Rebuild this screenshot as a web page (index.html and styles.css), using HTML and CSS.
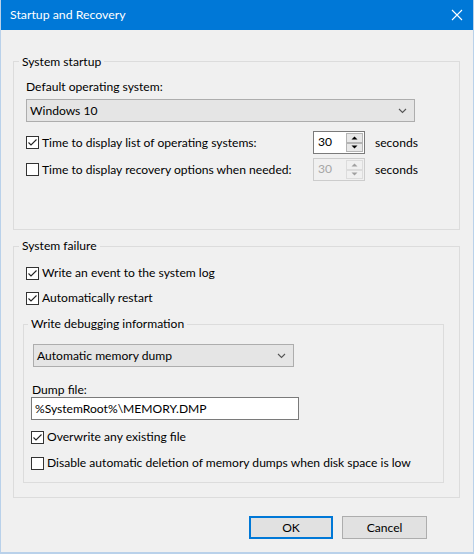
FILE: index.html
```html
<!DOCTYPE html>
<html>
<head>
<meta charset="utf-8">
<link rel="stylesheet" href="styles.css">
</head>
<body>
<div class="window">
  <div class="titlebar">
    <span class="title">Startup and Recovery</span>
    <svg class="close" width="12" height="12" viewBox="0 0 12 12"><path d="M1 1L11 11M11 1L1 11" stroke="#fff" stroke-width="1.1" fill="none"/></svg>
  </div>
  <div class="content">
    <div class="group g1">
      <div class="legend">System startup</div>
      <div class="label l1">Default operating system:</div>
      <div class="select s1"><span>Windows 10</span><svg width="9" height="6" viewBox="0 0 9 6"><path d="M1 1L4.5 4.5L8 1" stroke="#555" stroke-width="1.1" fill="none"/></svg></div>
      <div class="spinrow r1">
        <label class="cb"><svg class="box" width="13" height="13" viewBox="0 0 13 13"><rect x="0.5" y="0.5" width="12" height="12" fill="#fff" stroke="#333"/><path d="M2.5 6.5L5 9L10.5 3.5" stroke="#222" stroke-width="1.1" fill="none"/></svg><span>Time to display list of operating systems:</span></label>
        <div class="spin"><span class="val">30</span><div class="btns"><div class="sb"><svg width="7" height="4" viewBox="0 0 7 4"><path d="M0.5 3.5L3.5 0.5L6.5 3.5Z" fill="#000"/></svg></div><div class="sb"><svg width="7" height="4" viewBox="0 0 7 4"><path d="M0.5 0.5L3.5 3.5L6.5 0.5Z" fill="#000"/></svg></div></div></div>
        <span class="sec">seconds</span>
      </div>
      <div class="spinrow r2">
        <label class="cb"><svg class="box" width="13" height="13" viewBox="0 0 13 13"><rect x="0.5" y="0.5" width="12" height="12" fill="#fff" stroke="#333"/></svg><span>Time to display recovery options when needed:</span></label>
        <div class="spin disabled"><span class="val">30</span><div class="btns"><div class="sb"><svg width="7" height="4" viewBox="0 0 7 4"><path d="M0.5 3.5L3.5 0.5L6.5 3.5Z" fill="#a0a0a0"/></svg></div><div class="sb"><svg width="7" height="4" viewBox="0 0 7 4"><path d="M0.5 0.5L3.5 3.5L6.5 0.5Z" fill="#a0a0a0"/></svg></div></div></div>
        <span class="sec">seconds</span>
      </div>
    </div>

    <div class="group g2">
      <div class="legend">System failure</div>
      <label class="cb c1"><svg class="box" width="13" height="13" viewBox="0 0 13 13"><rect x="0.5" y="0.5" width="12" height="12" fill="#fff" stroke="#333"/><path d="M2.5 6.5L5 9L10.5 3.5" stroke="#222" stroke-width="1.1" fill="none"/></svg><span>Write an event to the system log</span></label>
      <label class="cb c2"><svg class="box" width="13" height="13" viewBox="0 0 13 13"><rect x="0.5" y="0.5" width="12" height="12" fill="#fff" stroke="#333"/><path d="M2.5 6.5L5 9L10.5 3.5" stroke="#222" stroke-width="1.1" fill="none"/></svg><span>Automatically restart</span></label>
      <div class="group g3">
        <div class="legend">Write debugging information</div>
        <div class="select s2"><span>Automatic memory dump</span><svg width="9" height="6" viewBox="0 0 9 6"><path d="M1 1L4.5 4.5L8 1" stroke="#555" stroke-width="1.1" fill="none"/></svg></div>
        <div class="label l2">Dump file:</div>
        <div class="input">%SystemRoot%\MEMORY.DMP</div>
        <label class="cb c3"><svg class="box" width="13" height="13" viewBox="0 0 13 13"><rect x="0.5" y="0.5" width="12" height="12" fill="#fff" stroke="#333"/><path d="M2.5 6.5L5 9L10.5 3.5" stroke="#222" stroke-width="1.1" fill="none"/></svg><span>Overwrite any existing file</span></label>
        <label class="cb c4"><svg class="box" width="13" height="13" viewBox="0 0 13 13"><rect x="0.5" y="0.5" width="12" height="12" fill="#fff" stroke="#333"/></svg><span>Disable automatic deletion of memory dumps when disk space is low</span></label>
      </div>
    </div>

    <div class="buttons">
      <div class="btn ok">OK</div>
      <div class="btn">Cancel</div>
    </div>
  </div>
</div>
</body>
</html>
```

FILE: styles.css
```css
html, body {
  margin: 0;
  padding: 0;
  background: #ffffff;
}
.window {
  width: 474px;
  height: 554px;
  box-sizing: border-box;
  background: #f0f0f0;
  border-left: 1px solid #b9d1ea;
  border-right: 1px solid #b9d1ea;
  border-bottom: 2px solid #b9d1ea;
  font-family: "Lato", "Liberation Sans", sans-serif;
  font-size: 12.1px;
  color: #000;
  overflow: hidden;
}
.titlebar {
  height: 30px;
  background: #0078d7;
  margin: 0 -1px;
  display: flex;
  align-items: center;
  justify-content: space-between;
  padding: 0 11px 0 10px;
  color: #fff;
}
.title {
  font-size: 12.3px;
  line-height: 16px;
}
.close {
  display: block;
}
.content {
  padding: 31px 13px 0 12px;
}
.group {
  border: 1px solid #dcdcdc;
  box-sizing: border-box;
}
.legend {
  width: fit-content;
  line-height: 16px;
  background: #f0f0f0;
  padding: 0 3px;
}
.g1 {
  padding: 0 44px 48px 12px;
}
.g1 > .legend {
  margin: -8px 0 0 -7px;
}
.label {
  line-height: 16px;
}
.l1 {
  margin-top: 9px;
}
.select {
  height: 23px;
  box-sizing: border-box;
  background: #e5e5e5;
  border: 1px solid #adadad;
  display: flex;
  align-items: center;
  justify-content: space-between;
  padding: 0 7px 0 3px;
}
.select svg {
  display: block;
}
.s1 {
  margin-top: 4px;
}
.spinrow {
  display: flex;
  align-items: center;
  height: 23px;
  margin-right: -4px;
}
.r1 {
  margin-top: 9px;
}
.r2 {
  margin-top: 4px;
}
.spinrow .cb {
  flex: 1;
}
.cb {
  display: flex;
  align-items: center;
  line-height: 16px;
  white-space: nowrap;
}
.cb .box {
  display: block;
  flex: none;
  margin-right: 3px;
}
.spin {
  width: 52px;
  height: 23px;
  box-sizing: border-box;
  border: 1px solid #7a7a7a;
  background: #fff;
  display: flex;
}
.spin .val {
  flex: 1;
  padding-left: 4px;
  line-height: 19px;
}
.spin .btns {
  width: 17px;
  display: flex;
  flex-direction: column;
  padding: 1px 1px 1px 0;
  gap: 0;
}
.sb {
  flex: 1;
  border: 1px solid #b5b5b5;
  background: #e8e8e8;
  display: flex;
  align-items: center;
  justify-content: center;
}
.sb svg {
  display: block;
}
.spin.disabled {
  border-color: #cccccc;
  background: #f0f0f0;
  color: #a6a6a6;
}
.spin.disabled .sb {
  border-color: #dcdcdc;
  background: #f0f0f0;
}
.sec {
  width: 44px;
  margin-left: 10px;
}
.g2 {
  margin-top: 16px;
  padding: 0 15px 14px 9px;
}
.g2 > .legend {
  margin: -9px 0 0 -4px;
}
.g2 > .cb {
  margin-left: 3px;
}
.c1 {
  margin-top: 11px;
}
.c2 {
  margin-top: 9px;
}
.g3 {
  margin-top: 18px;
  padding: 0 8px 11px 8px;
}
.g3 > .legend {
  margin: -9px 0 0 -4px;
}
.s2 {
  margin-top: 12px;
  width: 261px;
  margin-left: 1px;
}
.l2 {
  margin-top: 15px;
  line-height: 15px;
}
.input {
  width: 268px;
  height: 23px;
  box-sizing: border-box;
  border: 1px solid #7a7a7a;
  background: #fff;
  margin-left: -1px;
  padding-left: 3px;
  line-height: 21px;
}
.g3 > .cb {
  margin-left: -1px;
}
.c3 {
  margin-top: 9px;
}
.c4 {
  margin-top: 10px;
}
.buttons {
  display: flex;
  justify-content: flex-end;
  gap: 9px;
  margin-top: 18px;
  padding-right: 33px;
}
.btn {
  width: 85px;
  height: 23px;
  box-sizing: border-box;
  border: 1px solid #adadad;
  background: #e1e1e1;
  display: flex;
  align-items: center;
  justify-content: center;
}
.btn.ok {
  width: 84px;
  border: 2px solid #0078d7;
}
```
